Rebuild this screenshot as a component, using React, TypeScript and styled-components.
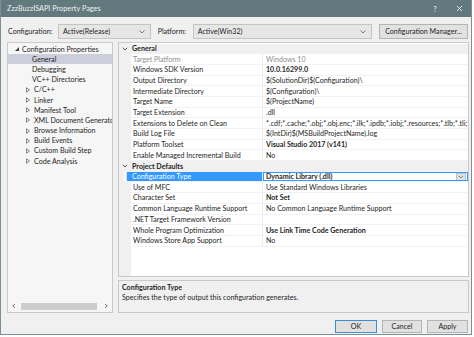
import React from 'react';
import styled, { createGlobalStyle } from 'styled-components';

const GlobalStyle = createGlobalStyle`
  html, body {
    margin: 0;
    padding: 0;
    background: #ffffff;
  }
  body {
    font-family: Lato, "Open Sans", "Liberation Sans", sans-serif;
    font-size: 7.1px;
    color: #1e1e1e;
  }
  * { box-sizing: border-box; }
`;

const Window = styled.div`
  width: 472px;
  height: 335px;
  background: #f0f0f0;
  border: 1px solid #7c8f92;
  border-top: none;
  display: flex;
  flex-direction: column;
  overflow: hidden;
`;

const TitleBar = styled.div`
  height: 17px;
  background: #627a7e;
  color: #eef2f2;
  display: flex;
  align-items: center;
  padding: 0 0 0 6px;
  font-size: 7.3px;
  flex-shrink: 0;
`;

const TitleText = styled.div`
  flex: 1;
`;

const TitleButton = styled.div`
  width: 24px;
  height: 17px;
  display: flex;
  align-items: center;
  justify-content: center;
  color: #eef2f2;
  font-size: 7px;
`;

const ConfigRow = styled.div`
  display: flex;
  align-items: center;
  height: 15px;
  margin: 7px 3px 0 7px;
`;

const FieldLabel = styled.span<{ $w: number }>`
  width: ${p => p.$w}px;
  flex-shrink: 0;
`;

const Combo = styled.div<{ $w: number }>`
  width: ${p => p.$w}px;
  height: 15px;
  background: #e6e6e6;
  border: 1px solid #c4c4c4;
  display: flex;
  align-items: center;
  padding-left: 4px;
  margin-right: 7px;
`;

const ComboText = styled.span`
  flex: 1;
`;

const ComboArrow = styled.svg`
  width: 8px;
  height: 8px;
  margin-right: 4px;
`;

const Button = styled.div<{ $w: number; $h?: number; $default?: boolean }>`
  width: ${p => p.$w}px;
  height: ${p => p.$h ?? 13}px;
  background: #e1e1e1;
  border: 1px solid ${p => (p.$default ? '#3c8fd6' : '#b4b4b4')};
  display: flex;
  align-items: center;
  justify-content: center;
  flex-shrink: 0;
`;

const Main = styled.div`
  display: flex;
  margin: 3px 2px 0 6px;
  height: 271px;
  gap: 5px;
`;

const Tree = styled.div`
  width: 106px;
  flex-shrink: 0;
  background: #f6f6f6;
  border: 1px solid #cacaca;
  display: flex;
  flex-direction: column;
  padding-top: 1px;
`;

const TreeItems = styled.div`
  flex: 1;
`;

const TreeRow = styled.div<{ $indent: number; $selected?: boolean }>`
  height: 10.2px;
  display: flex;
  align-items: center;
  padding-left: ${p => p.$indent}px;
  background: ${p => (p.$selected ? '#cccedb' : 'transparent')};
  white-space: nowrap;
  overflow: hidden;
`;

const TreeGlyph = styled.svg<{ $gap: number }>`
  width: 6px;
  height: 6px;
  margin-right: ${p => p.$gap}px;
  flex-shrink: 0;
`;

const HScroll = styled.div`
  height: 8px;
  margin: 0 3px 2px 3px;
  display: flex;
  align-items: center;
  gap: 2px;
`;

const ScrollArrow = styled.svg`
  width: 6px;
  height: 6px;
  flex-shrink: 0;
`;

const ScrollThumb = styled.div`
  flex: 1;
  height: 7px;
  margin: 0 4px 0 2px;
  background: #cdcdcd;
`;

const RightCol = styled.div`
  flex: 1;
  min-width: 0;
  display: flex;
  flex-direction: column;
  gap: 3px;
`;

const Grid = styled.div`
  height: 235px;
  background: #ffffff;
  border: 1px solid #cacaca;
  position: relative;
  overflow: hidden;
`;

const Gutter = styled.div`
  position: absolute;
  left: 0;
  top: 0;
  bottom: 0;
  width: 12px;
  background: #f0f0f0;
`;

const Rows = styled.div`
  position: relative;
  padding-top: 0.5px;
`;

const CategoryRow = styled.div`
  height: 10.7px;
  display: flex;
  align-items: center;
  background: #f0f0f0;
  font-weight: 700;
  padding-left: 3px;
`;

const Chevron = styled.svg`
  width: 6px;
  height: 6px;
  margin-right: 4px;
`;

const PropRow = styled.div`
  height: 10.7px;
  display: flex;
  margin-left: 12px;
  border-bottom: 1px solid #f2f2f2;
`;

const PropName = styled.div<{ $selected?: boolean; $muted?: boolean }>`
  width: ${p => (p.$selected ? 139 : 132)}px;
  margin-left: ${p => (p.$selected ? -7 : 0)}px;
  flex-shrink: 0;
  display: flex;
  align-items: center;
  padding-left: ${p => (p.$selected ? '0' : '2px')};
  color: ${p => (p.$selected ? '#ffffff' : p.$muted ? '#8d8d8d' : '#1e1e1e')};
  background: ${p => (p.$selected ? '#3399ff' : 'transparent')};
  border-right: 1px solid #ececec;
  white-space: nowrap;
  overflow: hidden;
`;

const Caret = styled.div`
  width: 3px;
  height: 100%;
  background: #ffffff;
  border-right: 1px solid #cfe6ff;
  margin-right: 5px;
  flex-shrink: 0;
`;

const PropValue = styled.div<{ $bold?: boolean; $muted?: boolean; $editing?: boolean }>`
  flex: 1;
  min-width: 0;
  display: flex;
  align-items: center;
  padding-left: ${p => (p.$editing ? '2px' : '3px')};
  font-weight: ${p => (p.$bold ? 700 : 400)};
  color: ${p => (p.$muted ? '#8d8d8d' : '#1e1e1e')};
  white-space: nowrap;
  overflow: hidden;
  border: ${p => (p.$editing ? '1px solid #3399ff' : 'none')};
  padding-right: ${p => (p.$editing ? '1px' : '0')};
`;

const ValueText = styled.span`
  flex: 1;
  min-width: 0;
  overflow: hidden;
`;

const DropButton = styled.div`
  width: 10px;
  height: 8px;
  flex-shrink: 0;
  background: #dedede;
  border: 1px solid #c4c4c4;
  display: flex;
  align-items: center;
  justify-content: center;
`;

const Description = styled.div`
  flex: 1;
  background: #f0f0f0;
  border: 1px solid #cacaca;
  padding: 2px 3px;
  display: flex;
  flex-direction: column;
`;

const DescTitle = styled.div`
  font-weight: 700;
  line-height: 10px;
`;

const DescText = styled.div`
  line-height: 10px;
`;

const Footer = styled.div`
  display: flex;
  justify-content: flex-end;
  gap: 5px;
  margin: 7px 3px 0 0;
`;

type Prop = {
  name: string;
  value: string;
  bold?: boolean;
  muted?: boolean;
  selected?: boolean;
};

const generalProps: Prop[] = [
  { name: 'Target Platform', value: 'Windows 10', muted: true },
  { name: 'Windows SDK Version', value: '10.0.16299.0', bold: true },
  { name: 'Output Directory', value: '$(SolutionDir)$(Configuration)\\' },
  { name: 'Intermediate Directory', value: '$(Configuration)\\' },
  { name: 'Target Name', value: '$(ProjectName)' },
  { name: 'Target Extension', value: '.dll' },
  {
    name: 'Extensions to Delete on Clean',
    value: '*.cdf;*.cache;*.obj;*.obj.enc;*.ilk;*.ipdb;*.iobj;*.resources;*.tlb;*.tli;*.t'
  },
  { name: 'Build Log File', value: '$(IntDir)$(MSBuildProjectName).log' },
  { name: 'Platform Toolset', value: 'Visual Studio 2017 (v141)', bold: true },
  { name: 'Enable Managed Incremental Build', value: 'No' }
];

const defaultProps: Prop[] = [
  { name: 'Configuration Type', value: 'Dynamic Library (.dll)', bold: true, selected: true },
  { name: 'Use of MFC', value: 'Use Standard Windows Libraries' },
  { name: 'Character Set', value: 'Not Set', bold: true },
  { name: 'Common Language Runtime Support', value: 'No Common Language Runtime Support' },
  { name: '.NET Target Framework Version', value: '' },
  { name: 'Whole Program Optimization', value: 'Use Link Time Code Generation', bold: true },
  { name: 'Windows Store App Support', value: 'No' }
];

const treeChildren = ['General', 'Debugging', 'VC++ Directories'];
const treeCollapsed = [
  'C/C++',
  'Linker',
  'Manifest Tool',
  'XML Document Generator',
  'Browse Information',
  'Build Events',
  'Custom Build Step',
  'Code Analysis'
];

const DownArrow = () => (
  <ComboArrow viewBox="0 0 8 8">
    <polyline points="1.5,2.5 4,5 6.5,2.5" fill="none" stroke="#6d6d6d" strokeWidth="0.9" />
  </ComboArrow>
);

const PropLine: React.FC<{ p: Prop }> = ({ p }) => (
  <PropRow>
    <PropName $selected={p.selected} $muted={p.muted}>
      {p.selected && <Caret />}
      {p.name}
    </PropName>
    <PropValue $bold={p.bold} $muted={p.muted} $editing={p.selected}>
      <ValueText>{p.value}</ValueText>
      {p.selected && (
        <DropButton>
          <svg width="6" height="6" viewBox="0 0 6 6">
            <polyline points="1,2 3,4 5,2" fill="none" stroke="#6d6d6d" strokeWidth="0.8" />
          </svg>
        </DropButton>
      )}
    </PropValue>
  </PropRow>
);

const Category: React.FC<{ title: string }> = ({ title }) => (
  <CategoryRow>
    <Chevron viewBox="0 0 6 6">
      <polyline points="0.8,1.8 3,4 5.2,1.8" fill="none" stroke="#444" strokeWidth="0.9" />
    </Chevron>
    {title}
  </CategoryRow>
);

export default function App() {
  return (
    <>
      <GlobalStyle />
      <Window>
        <TitleBar>
          <TitleText>ZzzBuzzISAPI Property Pages</TitleText>
          <TitleButton>?</TitleButton>
          <TitleButton>
            <svg width="7" height="7" viewBox="0 0 7 7">
              <path d="M1 1 L6 6 M6 1 L1 6" stroke="#eef2f2" strokeWidth="0.9" />
            </svg>
          </TitleButton>
        </TitleBar>

        <ConfigRow>
          <FieldLabel $w={50}>Configuration:</FieldLabel>
          <Combo $w={94}>
            <ComboText>Active(Release)</ComboText>
            <DownArrow />
          </Combo>
          <FieldLabel $w={35}>Platform:</FieldLabel>
          <Combo $w={182}>
            <ComboText>Active(Win32)</ComboText>
            <DownArrow />
          </Combo>
          <Button $w={89} $h={15}>Configuration Manager...</Button>
        </ConfigRow>

        <Main>
          <Tree>
            <TreeItems>
              <TreeRow $indent={6}>
                <TreeGlyph $gap={2} viewBox="0 0 6 6">
                  <polygon points="5,1 5,5 1,5" fill="#404040" />
                </TreeGlyph>
                Configuration Properties
              </TreeRow>
              {treeChildren.map(c => (
                <TreeRow key={c} $indent={24} $selected={c === 'General'}>
                  {c}
                </TreeRow>
              ))}
              {treeCollapsed.map(c => (
                <TreeRow key={c} $indent={17}>
                  <TreeGlyph $gap={3} viewBox="0 0 6 6">
                    <polygon points="1.5,0.8 4.5,3 1.5,5.2" fill="none" stroke="#555" strokeWidth="0.7" />
                  </TreeGlyph>
                  {c}
                </TreeRow>
              ))}
            </TreeItems>
            <HScroll>
              <ScrollArrow viewBox="0 0 6 6">
                <polyline points="3.8,1 1.8,3 3.8,5" fill="none" stroke="#606060" strokeWidth="0.9" />
              </ScrollArrow>
              <ScrollThumb />
              <ScrollArrow viewBox="0 0 6 6">
                <polyline points="2.2,1 4.2,3 2.2,5" fill="none" stroke="#606060" strokeWidth="0.9" />
              </ScrollArrow>
            </HScroll>
          </Tree>

          <RightCol>
            <Grid>
              <Gutter />
              <Rows>
                <Category title="General" />
                {generalProps.map(p => (
                  <PropLine key={p.name} p={p} />
                ))}
                <Category title="Project Defaults" />
                {defaultProps.map(p => (
                  <PropLine key={p.name} p={p} />
                ))}
              </Rows>
            </Grid>
            <Description>
              <DescTitle>Configuration Type</DescTitle>
              <DescText>Specifies the type of output this configuration generates.</DescText>
            </Description>
          </RightCol>
        </Main>

        <Footer>
          <Button $w={42} $default>OK</Button>
          <Button $w={40}>Cancel</Button>
          <Button $w={41}>Apply</Button>
        </Footer>
      </Window>
    </>
  );
}
